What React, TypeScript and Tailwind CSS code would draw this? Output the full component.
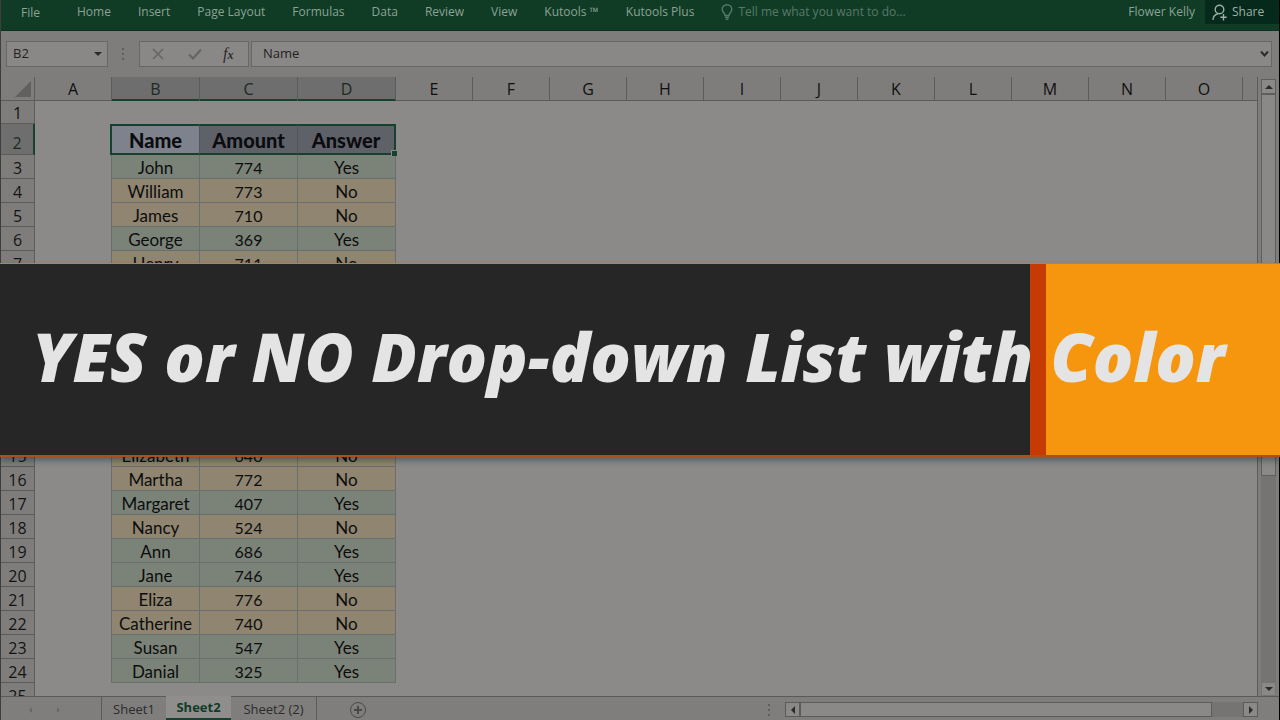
import clsx from "clsx";

type Answer = "Yes" | "No";

interface Entry {
  row: number;
  name?: string;
  amount?: number;
  answer?: Answer;
}

const tabs = ["Home", "Insert", "Page Layout", "Formulas", "Data", "Review", "View", "Kutools ™", "Kutools Plus"];
const columns = ["A", "B", "C", "D", "E", "F", "G", "H", "I", "J", "K", "L", "M", "N", "O"];
const selectedColumns = ["B", "C", "D"];
const sheets = ["Sheet1", "Sheet2", "Sheet2 (2)"];

const entries: Entry[] = [
  { row: 3, name: "John", amount: 774, answer: "Yes" },
  { row: 4, name: "William", amount: 773, answer: "No" },
  { row: 5, name: "James", amount: 710, answer: "No" },
  { row: 6, name: "George", amount: 369, answer: "Yes" },
  { row: 7, name: "Henry", amount: 711, answer: "No" },
  { row: 8 },
  { row: 9 },
  { row: 10 },
  { row: 11 },
  { row: 12 },
  { row: 13 },
  { row: 14 },
  { row: 15, name: "Elizabeth", amount: 640, answer: "No" },
  { row: 16, name: "Martha", amount: 772, answer: "No" },
  { row: 17, name: "Margaret", amount: 407, answer: "Yes" },
  { row: 18, name: "Nancy", amount: 524, answer: "No" },
  { row: 19, name: "Ann", amount: 686, answer: "Yes" },
  { row: 20, name: "Jane", amount: 746, answer: "Yes" },
  { row: 21, name: "Eliza", amount: 776, answer: "No" },
  { row: 22, name: "Catherine", amount: 740, answer: "No" },
  { row: 23, name: "Susan", amount: 547, answer: "Yes" },
  { row: 24, name: "Danial", amount: 325, answer: "Yes" },
];

const rowHead = "border-r border-b border-[#5c5b5a] bg-[#7e7d7c] p-0 pt-[2px] text-center text-base leading-5 font-normal text-[#141414]";

function Dots() {
  return (
    <svg width="3" height="14" viewBox="0 0 3 14" fill="#5f5e5d">
      <rect x="0" y="1" width="2" height="2" />
      <rect x="0" y="6" width="2" height="2" />
      <rect x="0" y="11" width="2" height="2" />
    </svg>
  );
}

function Arrow({ points }: { points: string }) {
  return (
    <svg width="10" height="10" viewBox="0 0 10 10" fill="#2b2b2b">
      <polygon points={points} />
    </svg>
  );
}

function Ribbon() {
  return (
    <nav className="flex h-[31px] shrink-0 items-start border-b border-[#0a2f1c] bg-[#103c26] text-xs text-[#8ba294]">
      <button className="ml-5 h-[25px] w-14 text-left">File</button>
      <div className="flex h-6 gap-[27px] whitespace-nowrap">
        {tabs.map((tab) => (
          <button key={tab}>{tab}</button>
        ))}
        <button className="flex items-center gap-[5px] text-[#58796a]">
          <svg width="12" height="16" viewBox="0 0 12 16" fill="none" stroke="currentColor" strokeWidth="1.4">
            <path d="M4 11.5C4 9 1.2 8.3 1.2 5.5a4.8 4.8 0 0 1 9.6 0C10.8 8.3 8 9 8 11.5Z" />
            <path d="M4 13.3h4M4.6 15.2h2.8" />
          </svg>
          Tell me what you want to do...
        </button>
      </div>
      <button className="mr-[10px] ml-auto h-6">Flower Kelly</button>
      <button className="flex h-6 w-[74px] items-center gap-1 bg-[#05291a] pl-[7px] text-[#9db0a5]">
        <svg width="16" height="17" viewBox="0 0 16 17" fill="none" stroke="currentColor" strokeWidth="1.4">
          <circle cx="7.5" cy="5.5" r="4.3" />
          <path d="M1 16c0-3.6 2-5.6 5-6.3M11.5 10v6.4M8.3 13.2h6.4" />
        </svg>
        Share
      </button>
    </nav>
  );
}

function FormulaBar() {
  return (
    <div className="flex h-[46px] shrink-0 items-center bg-[#7f7d7b] pr-[7px] pl-[5px] text-[13px]">
      <div className="flex h-[26px] w-[102px] items-center border border-[#686766] bg-[#8a8887]">
        <input aria-label="Name box" defaultValue="B2" className="w-20 pl-[6px] text-[#222] outline-none" />
        <button aria-label="Open name list" className="ml-auto mr-1">
          <Arrow points="1,3 9,3 5,7" />
        </button>
      </div>
      <span className="mx-[14px]">
        <Dots />
      </span>
      <div className="flex h-[26px] w-[110px] items-center border border-[#686766] bg-[#8a8887]">
        <button aria-label="Cancel" className="ml-3">
          <svg width="12" height="12" viewBox="0 0 12 12" stroke="#656463" strokeWidth="1.5">
            <path d="M1 1l10 10M11 1L1 11" />
          </svg>
        </button>
        <button aria-label="Enter" className="ml-6">
          <svg width="14" height="12" viewBox="0 0 14 12" fill="none" stroke="#656463" strokeWidth="2.2">
            <path d="M1 6.5l4 4L13 1.5" />
          </svg>
        </button>
        <button aria-label="Insert function" className="ml-[21px] font-['Liberation_Serif',serif] text-base leading-5 text-[#2c2b2b] italic">
          f<span className="text-xs font-bold">x</span>
        </button>
      </div>
      <div className="ml-[2px] flex h-[26px] flex-1 items-center border border-[#686766] bg-[#8a8887]">
        <input aria-label="Formula" defaultValue="Name" className="min-w-0 flex-1 pl-[11px] text-[#222] outline-none" />
        <button aria-label="Expand formula bar" className="mr-[2px]">
          <svg width="9" height="8" viewBox="0 0 9 8" fill="none" stroke="#2b2b2b" strokeWidth="2">
            <path d="M1 1.5l3.5 4L8 1.5" />
          </svg>
        </button>
      </div>
    </div>
  );
}

function Grid() {
  return (
    <table className="w-full table-fixed border-separate border-spacing-0">
      <colgroup>
        <col className="w-[34px]" />
        <col className="w-[77px]" />
        <col className="w-[88px]" />
        <col className="w-[98px]" />
        <col className="w-[98px]" />
        {columns.slice(4).map((column) => (
          <col key={column} className="w-[77px]" />
        ))}
        <col />
      </colgroup>
      <thead>
        <tr className="h-6 bg-[#7f7d7b]">
          <td className="border-r border-b border-[#5c5b5a] p-0">
            <svg className="ml-auto mr-[3px]" width="16" height="16" viewBox="0 0 16 16" fill="#62605f">
              <polygon points="16,0 16,16 0,16" />
            </svg>
          </td>
          {columns.map((column) => (
            <th
              key={column}
              scope="col"
              className={clsx(
                "border-r border-b border-r-[#5c5b5a] p-0 text-base leading-5 font-normal",
                selectedColumns.includes(column)
                  ? "border-b-[#16412e] bg-[#6d6e6d] text-[#1c2a23] shadow-[inset_0_-1px_0_#16412e]"
                  : "border-b-[#5c5b5a] text-[#101010]",
              )}
            >
              {column}
            </th>
          ))}
          <td className="border-b border-[#5c5b5a] p-0" />
        </tr>
      </thead>
      <tbody>
        <tr className="h-[23px]">
          <th scope="row" className={rowHead}>1</th>
          <td colSpan={16} className="p-0" />
        </tr>
        <tr className="h-[31px]">
          <th scope="row" className="border-r-2 border-b border-r-[#16412e] border-b-[#5c5b5a] bg-[#6d6e6d] p-0 pt-2 text-center text-base leading-5 font-normal text-[#1c2a23]">2</th>
          <td className="border-r-2 border-[#16412e] p-0" />
          {["Name", "Amount", "Answer"].map((title, i) => (
            <td
              key={title}
              className={clsx(
                "relative border-y-2 border-y-[#16412e] p-0 text-center font-['Lato',sans-serif] text-xl leading-6 font-black text-[#0b0c0f]",
                i === 0 && "border-r border-r-[#50535a] bg-[#7e828c]",
                i === 1 && "border-r border-r-[#50535a] bg-[#5f6169]",
                i === 2 && "border-r-2 border-r-[#16412e] bg-[#5f6169]",
              )}
            >
              {title}
              {i === 2 && <span className="absolute -right-[3px] -bottom-[3px] size-[6px] border-t border-l border-[#8b8a89] bg-[#16412e]" />}
            </td>
          ))}
          <td colSpan={12} className="p-0" />
        </tr>
        {entries.map((entry) => (
          <tr key={entry.row} className="h-6">
            <th scope="row" className={rowHead}>{entry.answer && entry.row}</th>
            <td className="border-r border-[#69706b] p-0" />
            {[entry.name, entry.amount, entry.answer].map((value, i) => (
              <td
                key={i}
                className={clsx(
                  "border-r border-b border-[#69706b] p-0 pt-[2px] text-center font-['Lato',sans-serif] leading-5 text-[#0d0d0d]",
                  i === 1 ? "text-base" : "text-[17px]",
                  entry.answer === "No" ? "bg-[#8f8570]" : "bg-[#7b8379]",
                )}
              >
                {value}
              </td>
            ))}
            <td colSpan={12} className="p-0" />
          </tr>
        ))}
        <tr className="h-6">
          <th scope="row" className={rowHead}>25</th>
          <td colSpan={16} className="p-0" />
        </tr>
      </tbody>
    </table>
  );
}

function VerticalScroll() {
  return (
    <div className="flex w-[21px] shrink-0 flex-col bg-[#7f7d7b] pt-[2px] pr-[3px] pl-[3px]">
      <button aria-label="Scroll up" className="flex h-[15px] items-center justify-center border border-[#5f5e5d] bg-[#8a8988]">
        <Arrow points="1,7 5,3 9,7" />
      </button>
      <div className="flex-1 bg-[#757473]">
        <div className="h-[65%] border border-[#5f5e5d] bg-[#8a8988]" />
      </div>
      <button aria-label="Scroll down" className="flex h-[14px] items-center justify-center border border-[#757473] bg-[#8a8988]">
        <Arrow points="1,3 9,3 5,7" />
      </button>
    </div>
  );
}

function SheetTabs() {
  return (
    <footer className="flex h-6 shrink-0 items-stretch border-t border-[#5c5b5a] bg-[#7f7e7d] pr-[21px] text-[13px] text-[#2b2b2b]">
      <div className="flex w-[100px] items-center gap-[18px] pt-[2px] pl-6 opacity-25">
        <Arrow points="7,2 7,8 4,5" />
        <Arrow points="4,2 4,8 7,5" />
      </div>
      {sheets.map((sheet, i) => (
        <button
          key={sheet}
          className={clsx(
            "pt-[2px]",
            i === 0 && "w-[65px] border-l border-[#5c5b5a]",
            i === 1 && "-mt-px w-[65px] border-b-2 border-[#16412e] bg-[#8f8e8d] pt-1 font-bold text-[#103c26]",
            i === 2 && "w-[86px] border-r border-[#5c5b5a]",
          )}
        >
          {sheet}
        </button>
      ))}
      <button aria-label="New sheet" className="ml-8 pt-[2px]">
        <svg width="18" height="18" viewBox="0 0 18 18" fill="none" stroke="#4a4948">
          <circle cx="9" cy="9" r="7.5" />
          <path d="M9 5v8M5 9h8" strokeWidth="2" />
        </svg>
      </button>
      <div className="ml-auto flex w-[490px] items-center pt-[2px]">
        <Dots />
        <button aria-label="Scroll left" className="ml-[14px] flex h-[15px] w-[15px] items-center justify-center border border-[#5c5b5a] bg-[#8a8988]">
          <Arrow points="7,1 7,9 3,5" />
        </button>
        <div className="h-[15px] flex-1 bg-[#757473]">
          <div className="h-full w-[93%] border border-[#5c5b5a] bg-[#8a8988]" />
        </div>
        <button aria-label="Scroll right" className="flex h-[15px] w-[15px] items-center justify-center border border-[#5c5b5a] bg-[#8a8988]">
          <Arrow points="3,1 3,9 7,5" />
        </button>
      </div>
    </footer>
  );
}

function TitleBanner() {
  return (
    <div className="pointer-events-none fixed inset-0 flex items-center">
      <div className="relative flex h-[194px] w-full items-center border-t border-b-2 border-t-[#c47a4c] border-b-[#a8501f] bg-[#262626] shadow-[0_4px_6px_rgba(0,0,0,0.3)]">
        <div className="absolute inset-y-0 right-0 flex w-[250px]">
          <div className="w-4 bg-[#c63a04]" />
          <div className="flex-1 bg-[#f6960f]" />
        </div>
        <h1 className="relative pb-2 pl-8 font-['Open_Sans',sans-serif] text-[67px] leading-[72px] font-extrabold whitespace-nowrap text-[#e4e4e4] italic">
          YES or NO Drop-down List with Color
        </h1>
      </div>
    </div>
  );
}

export default function App() {
  return (
    <div className="flex h-screen flex-col overflow-hidden border-r border-l border-r-black border-l-[#3f3e3e] bg-[#8b8a89] font-['Open_Sans',sans-serif]">
      <Ribbon />
      <FormulaBar />
      <main className="flex min-h-0 flex-1">
        <div className="min-w-0 flex-1 overflow-hidden border-r border-[#5c5b5a]">
          <Grid />
        </div>
        <VerticalScroll />
      </main>
      <SheetTabs />
      <TitleBanner />
    </div>
  );
}
